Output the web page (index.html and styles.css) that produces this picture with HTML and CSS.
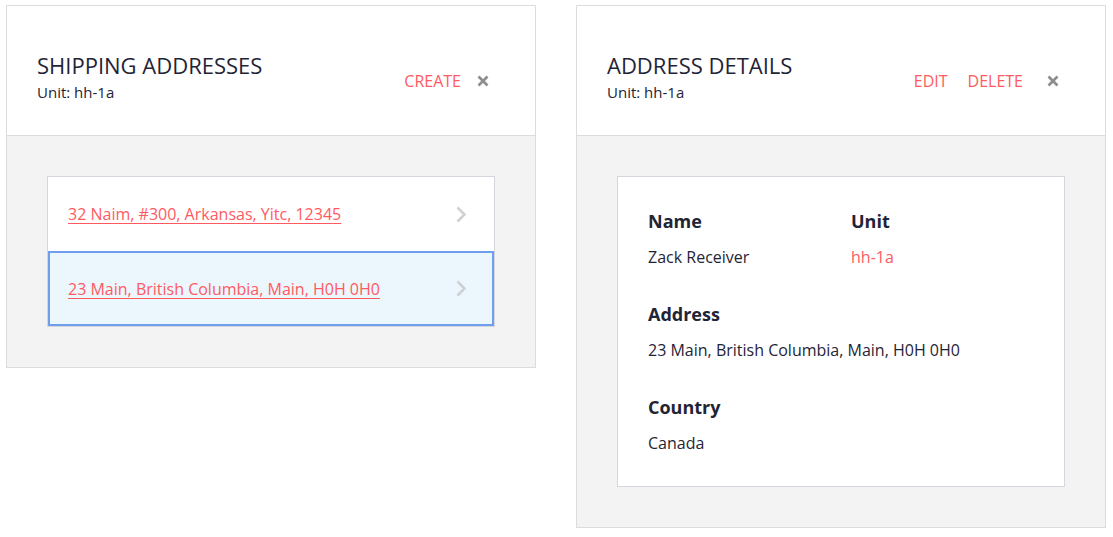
FILE: index.html
```html
<!DOCTYPE html>
<html>
<head>
<meta charset="utf-8">
<link rel="stylesheet" href="styles.css">
</head>
<body>
<div class="page">
  <section class="panel">
    <header class="panel-header">
      <div class="titles">
        <h1 class="title">SHIPPING ADDRESSES</h1>
        <div class="subtitle">Unit: hh-1a</div>
      </div>
      <div class="actions">
        <a class="action">CREATE</a>
        <button class="close close-near" aria-label="Close"><svg viewBox="0 0 12 12" width="12" height="12"><path d="M1.5 1.5L10.5 10.5M10.5 1.5L1.5 10.5" stroke="#8c8c8c" stroke-width="2.6" fill="none"/></svg></button>
      </div>
    </header>
    <div class="panel-body">
      <div class="card list">
        <div class="row"><a class="row-link">32 Naim, #300, Arkansas, Yitc, 12345</a><svg class="chev" viewBox="0 0 11 17" width="11" height="17"><path d="M1.5 1.5L8.5 8.5L1.5 15.5" stroke="#cfd0d4" stroke-width="2.5" fill="none"/></svg></div>
        <div class="row selected"><a class="row-link">23 Main, British Columbia, Main, H0H 0H0</a><svg class="chev" viewBox="0 0 11 17" width="11" height="17"><path d="M1.5 1.5L8.5 8.5L1.5 15.5" stroke="#cfd0d4" stroke-width="2.5" fill="none"/></svg></div>
      </div>
    </div>
  </section>
  <section class="panel">
    <header class="panel-header">
      <div class="titles">
        <h1 class="title">ADDRESS DETAILS</h1>
        <div class="subtitle">Unit: hh-1a</div>
      </div>
      <div class="actions">
        <a class="action">EDIT</a>
        <a class="action action-gap">DELETE</a>
        <button class="close close-far" aria-label="Close"><svg viewBox="0 0 12 12" width="12" height="12"><path d="M1.5 1.5L10.5 10.5M10.5 1.5L1.5 10.5" stroke="#8c8c8c" stroke-width="2.6" fill="none"/></svg></button>
      </div>
    </header>
    <div class="panel-body">
      <div class="card details">
        <div class="field">
          <div class="label">Name</div>
          <div class="value">Zack Receiver</div>
        </div>
        <div class="field">
          <div class="label">Unit</div>
          <div class="value red">hh-1a</div>
        </div>
        <div class="field wide">
          <div class="label">Address</div>
          <div class="value">23 Main, British Columbia, Main, H0H 0H0</div>
        </div>
        <div class="field wide">
          <div class="label">Country</div>
          <div class="value">Canada</div>
        </div>
      </div>
    </div>
  </section>
</div>
</body>
</html>
```
FILE: styles.css
```css
* { box-sizing: border-box; }
html, body { margin: 0; padding: 0; background: #fff; }
body { font-family: "Open Sans", "Liberation Sans", sans-serif; color: #1f2436; }
.page {
  display: flex;
  align-items: flex-start;
  gap: 40px;
  padding: 5px 6px;
}
.panel {
  width: 530px;
  border: 1px solid #dcdcdc;
  background: #fff;
}
.panel-header {
  display: flex;
  align-items: center;
  justify-content: space-between;
  padding: 44px 46px 31px 30px;
  border-bottom: 1px solid #dcdcdc;
}
.title {
  margin: 0;
  font-size: 22px;
  font-weight: 400;
  line-height: 30px;
  color: #1f2436;
}
.subtitle {
  font-size: 15px;
  line-height: 24px;
  color: #1f2436;
}
.actions {
  display: flex;
  align-items: center;
  padding-top: 8px;
}
.action {
  font-size: 16px;
  line-height: 22px;
  color: #ff5a5f;
  cursor: pointer;
}
.action-gap { margin-left: 20px; }
.close {
  border: 0;
  background: none;
  padding: 0;
  width: 12px;
  height: 12px;
  display: flex;
}
.close-near { margin-left: 16px; }
.close-far { margin-left: 24px; }
.panel-body {
  background: #f3f3f3;
  padding: 40px;
}
.card {
  background: #fff;
  border: 1px solid #d6d7de;
}
.row {
  display: flex;
  align-items: center;
  justify-content: space-between;
  height: 74px;
  padding: 0 27px 0 20px;
}
.row.selected {
  height: 75px;
  border: 2px solid #6e9eec;
  background: #ecf6fd;
  padding: 0 25px 0 18px;
}
.row-link {
  font-size: 16px;
  color: #ff5a5f;
  text-decoration: underline;
  text-underline-offset: 3px;
  cursor: pointer;
}
.details {
  display: grid;
  grid-template-columns: 1fr 1fr;
  column-gap: 20px;
  row-gap: 32px;
  padding: 31px 30px;
}
.field.wide { grid-column: 1 / -1; }
.label {
  font-size: 18px;
  font-weight: 700;
  line-height: 27px;
  margin-bottom: 10px;
  color: #1f2436;
}
.value {
  font-size: 16px;
  line-height: 24px;
  color: #1f2436;
}
.value.red { color: #ff5a5f; }
```
